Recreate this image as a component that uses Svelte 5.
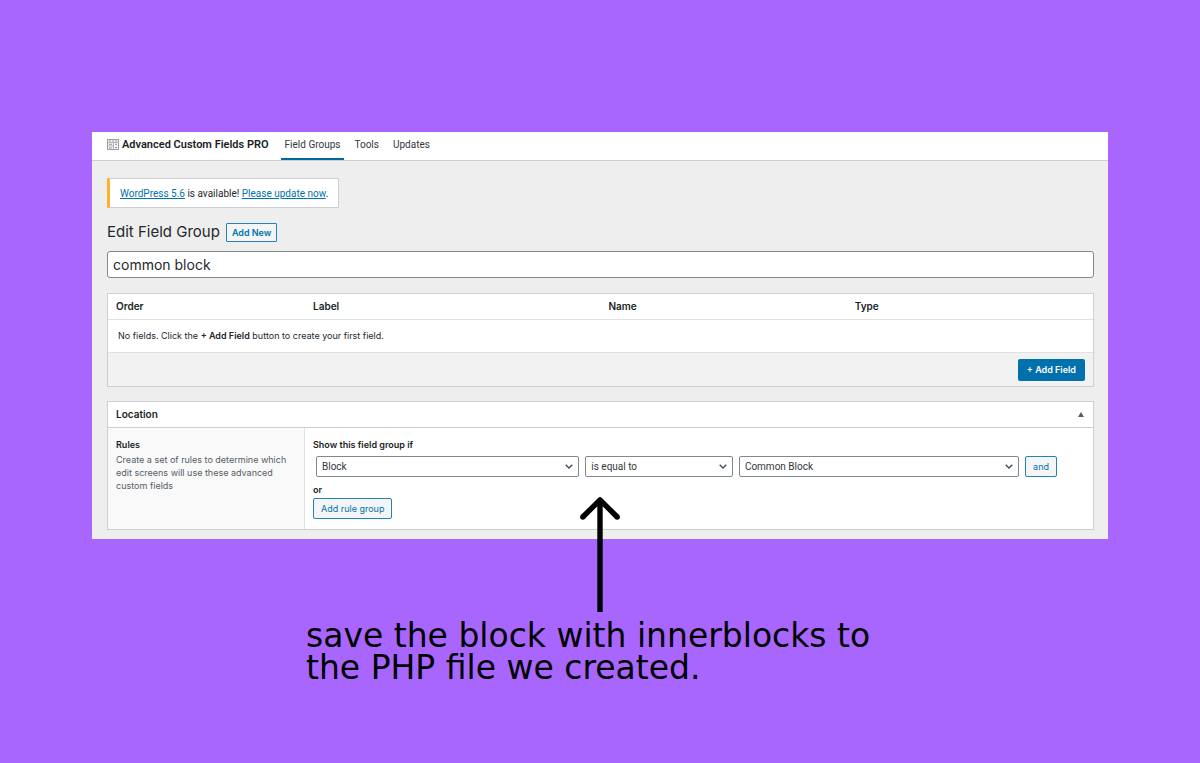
<script>
  let title = $state('common block');
  let open = $state(true);
  const tabs = ['Field Groups', 'Tools', 'Updates'];
</script>

<main>
  <div class="panel">
    <header>
      <svg class="logo" viewBox="0 0 12 11" aria-hidden="true">
        <rect x="0.5" y="0.5" width="11" height="10" fill="#f4f4f4" stroke="#9b9fa3" />
        <path d="M1 3.5h10M6.5 3.5v7M1 7h5" stroke="#b3b6b9" fill="none" />
        <path d="M2 2h2M5 2h2M8 2h2M2 5.3h3M8 5.3h2M2 9h3M8 8.5h2" stroke="#94989c" fill="none" />
      </svg>
      <h2>Advanced Custom Fields PRO</h2>
      <nav>
        {#each tabs as tab, i}
          <a href="#tab-{i}" class:active={i === 0}>{tab}</a>
        {/each}
      </nav>
    </header>

    <div class="content">
      <p class="notice"><a href="#version">WordPress 5.6</a> is available! <a href="#update">Please update now</a>.</p>

      <div class="heading">
        <h1>Edit Field Group</h1>
        <a class="add-new" href="#new">Add New</a>
      </div>

      <input class="title" type="text" aria-label="Field group title" bind:value={title} />

      <section class="box fields">
        <table>
          <thead>
            <tr><th class="order">Order</th><th class="label">Label</th><th class="name">Name</th><th class="type">Type</th></tr>
          </thead>
          <tbody>
            <tr><td colspan="4">No fields. Click the <strong>+ Add Field</strong> button to create your first field.</td></tr>
          </tbody>
        </table>
        <div class="foot"><button class="primary">+ Add Field</button></div>
      </section>

      <section class="box location-box">
        <div class="box-head">
          <h3>Location</h3>
          <button class="toggle" aria-label="Toggle Location" aria-expanded={open} onclick={() => (open = !open)}>
            <svg viewBox="0 0 6 5" aria-hidden="true"><path d="M3 0L6 5H0z" fill="#555d66" /></svg>
          </button>
        </div>
        {#if open}
          <div class="location">
            <div class="info">
              <h4>Rules</h4>
              <p>Create a set of rules to determine which edit screens will use these advanced custom fields</p>
            </div>
            <div class="rules">
              <h4>Show this field group if</h4>
              <div class="rule">
                <select aria-label="Parameter"><option>Block</option></select>
                <select aria-label="Operator"><option>is equal to</option></select>
                <select aria-label="Value"><option>Common Block</option></select>
                <button class="secondary">and</button>
              </div>
              <h4>or</h4>
              <button class="secondary group">Add rule group</button>
            </div>
          </div>
        {/if}
      </section>
    </div>

    <svg class="arrow" viewBox="0 0 40 116" aria-hidden="true">
      <path d="M20 116V4M2.8 21L20 3.8L37.2 21" fill="none" stroke="#000" stroke-width="5.4" stroke-linejoin="round" />
      <circle cx="2.8" cy="21" r="2.7" /><circle cx="37.2" cy="21" r="2.7" />
    </svg>
  </div>

  <p class="caption">save the block with innerblocks to the PHP file we created.</p>
</main>

<style>
  :global(body) {
    margin: 0;
    background: #a866ff;
  }
  main {
    padding: 132px 92px 80px;
    font: 10px/13px Inter, 'Liberation Sans', sans-serif;
    color: #23282d;
  }
  * { box-sizing: border-box; }
  h1, h2, h3, h4, p { margin: 0; }
  h2, h3, h4, th { font-size: 10px; font-weight: 600; color: #191e23; }
  input, select, button { font: inherit; margin: 0; }
  a { color: #0073aa; }
  .panel { position: relative; background: #eee; }
  header {
    display: flex;
    align-items: center;
    height: 29px;
    padding: 0 15px;
    font-family: Roboto, sans-serif;
    background: #fff;
    border-bottom: 1px solid #ccd0d4;
  }
  .logo { width: 12px; height: 11px; margin: 0 3px 4px 0; }
  h2 { padding-bottom: 4px; font-size: 11px; }
  nav { display: flex; align-self: stretch; gap: 6px; margin-left: 12px; }
  nav a {
    height: 28px;
    padding: 6px 4px 0;
    color: #32373c;
    text-decoration: none;
    border-bottom: 2px solid transparent;
  }
  nav a.active { border-color: #00699e; }
  .content { padding: 17px 14px 9px 15px; }
  .notice {
    width: fit-content;
    padding: 8px 10px 7px;
    font-family: Roboto, sans-serif;
    background: #fff;
    border: 1px solid #ccd0d4;
    border-left: 3px solid #ffb129;
  }
  .heading { display: flex; align-items: center; gap: 6px; margin: 14px 0 9px; }
  h1 { font-size: 15px; line-height: 20px; font-weight: 400; }
  .add-new {
    padding: 2px 5px;
    font-size: 9px;
    font-weight: 600;
    text-decoration: none;
    background: #f3f5f6;
    border: 1px solid #2383b3;
    border-radius: 1px;
  }
  .title {
    display: block;
    width: 100%;
    height: 27px;
    padding: 0 5px;
    font-size: 14px;
    color: #23282d;
    background: #fff;
    border: 1px solid #7e8993;
    border-radius: 3px;
  }
  .box { margin-top: 15px; background: #fff; border: 1px solid #ccd0d4; }
  .location-box { margin-top: 14px; }
  table { width: 100%; border-collapse: collapse; table-layout: fixed; }
  th { height: 25px; padding: 0 8px; text-align: left; border-bottom: 1px solid #dfe1e3; }
  .order { width: 20%; }
  .label { width: 30%; }
  .name, .type { width: 25%; }
  td { height: 33px; padding: 0 10px; font-size: 9px; border-bottom: 1px solid #dfe1e3; }
  strong { font-weight: 600; }
  .foot { display: flex; justify-content: flex-end; padding: 6px 8px 5px; background: #f2f2f2; }
  .primary {
    height: 22px;
    padding: 0 9px;
    font-size: 9px;
    font-weight: 600;
    color: #fff;
    background: #0071ad;
    border: 0;
    border-radius: 2px;
  }
  .box-head {
    display: flex;
    align-items: center;
    justify-content: space-between;
    height: 26px;
    padding: 0 8px;
    border-bottom: 1px solid #ccd0d4;
  }
  .toggle { display: flex; padding: 1px; background: none; border: 0; }
  .toggle svg { width: 6px; height: 5px; }
  .location { display: grid; grid-template-columns: 1fr 4fr; }
  h4 { font-size: 9px; }
  .info { padding: 10px 8px; background: #f9f9f9; border-right: 1px solid #dfe1e3; }
  .info p { margin-top: 2px; font-size: 9px; color: #555d66; }
  .rules { padding: 10px 36px 10px 8px; }
  .rule {
    display: grid;
    grid-template-columns: 264fr 148fr 281fr auto;
    gap: 6px;
    margin: 5px 0 6px 3px;
  }
  select {
    height: 21px;
    min-width: 0;
    padding: 0 20px 0 5px;
    font-family: Roboto, sans-serif;
    color: #32373c;
    appearance: none;
    background: #fff url("data:image/svg+xml,%3Csvg xmlns='http://www.w3.org/2000/svg' viewBox='0 0 8 5'%3E%3Cpath d='M0.7 0.7L4 4L7.3 0.7' fill='none' stroke='%23444c53' stroke-width='1.4'/%3E%3C/svg%3E") no-repeat right 5px center / 8px 5px;
    border: 1px solid #7e8993;
    border-radius: 2px;
  }
  .secondary {
    height: 21px;
    padding: 0 7px;
    font-size: 9px;
    color: #0073aa;
    background: #f3f5f6;
    border: 1px solid #2383b3;
    border-radius: 2px;
  }
  .group { display: block; margin-top: 2px; }
  .arrow {
    position: absolute;
    left: calc(50% - 20px);
    bottom: -73px;
    width: 40px;
    height: 116px;
  }
  .caption {
    width: 588px;
    max-width: 100%;
    margin: 81px auto 0;
    font: 33px/32px 'DejaVu Sans', sans-serif;
    color: #000;
  }
</style>
